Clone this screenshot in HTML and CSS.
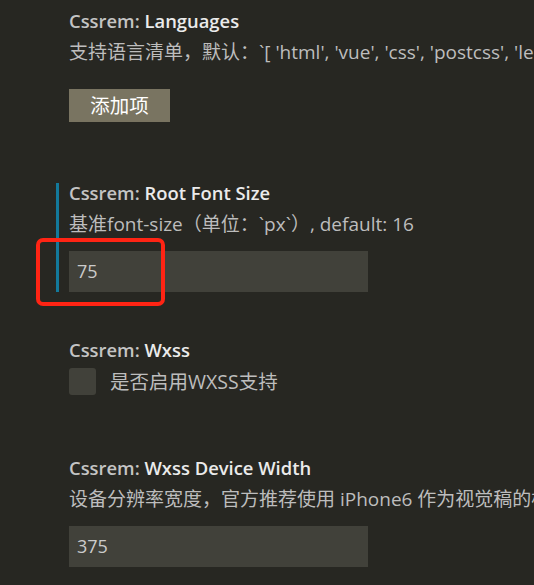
FILE: index.html
```html
<!DOCTYPE html>
<html lang="zh-CN">
<head>
<meta charset="utf-8">
<title>Cssrem settings</title>
<link rel="stylesheet" href="styles.css">
</head>
<body>
<div class="settings">
  <div class="setting s-lang">
    <div class="title"><span class="cat">Cssrem: </span><span class="label">Languages</span></div>
    <div class="desc">支持语言清单，默认：`[ 'html', 'vue', 'css', 'postcss', 'less', 'scss', 'sass', 'stylus' ]`</div>
    <button class="btn">添加项</button>
  </div>

  <div class="setting s-root focused">
    <div class="title"><span class="cat">Cssrem: </span><span class="label">Root Font Size</span></div>
    <div class="desc">基准font-size（单位：`px`）, default: 16</div>
    <div class="input">75</div>
    <div class="mark"></div>
  </div>

  <div class="setting s-wxss">
    <div class="title"><span class="cat">Cssrem: </span><span class="label">Wxss</span></div>
    <div class="check-row">
      <span class="checkbox"></span>
      <span class="check-label">是否启用WXSS支持</span>
    </div>
  </div>

  <div class="setting s-width">
    <div class="title"><span class="cat">Cssrem: </span><span class="label">Wxss Device Width</span></div>
    <div class="desc">设备分辨率宽度，官方推荐使用 iPhone6 作为视觉稿的标准。</div>
    <div class="input">375</div>
  </div>
</div>
</body>
</html>
```

FILE: styles.css
```css
html, body {
  margin: 0;
  padding: 0;
  background: #272722;
  overflow: hidden;
}

body {
  width: 534px;
  height: 585px;
  font-family: "Open Sans", "Noto Sans CJK SC", sans-serif;
  font-size: 18px;
  color: #bdbdbd;
}

.settings {
  padding-left: 69px;
  position: relative;
}

.setting {
  position: relative;
  white-space: nowrap;
}

.title {
  line-height: 20px;
  height: 20px;
  font-weight: 600;
  font-size: 18.4px;
}

.cat {
  color: #c4c4c4;
}

.label {
  color: #ebebeb;
}

.desc {
  margin-top: 11px;
  line-height: 20px;
  height: 20px;
  font-size: 19px;
  color: #bdbdbd;
}

.s-lang {
  padding-top: 11px;
}

.btn {
  display: block;
  margin-top: 27px;
  width: 101px;
  height: 33px;
  padding: 0;
  border: none;
  background: #797461;
  color: #ffffff;
  font-family: "Open Sans", "Noto Sans CJK SC", sans-serif;
  font-size: 19.5px;
  line-height: 33px;
  text-align: center;
}

.s-root {
  margin-top: 61px;
}

.focused {
  margin-left: -13px;
  padding-left: 10px;
  border-left: 3px solid #13799b;
}

.input {
  margin-top: 17px;
  width: 291px;
  height: 41px;
  padding-left: 8px;
  background: #41413a;
  color: #cbcbcb;
  line-height: 41px;
}

.mark {
  position: absolute;
  left: -23px;
  top: 55px;
  width: 121px;
  height: 60px;
  border: 4px solid #ff2414;
  border-radius: 7px;
}

.s-wxss {
  margin-top: 48px;
}

.check-row {
  margin-top: 8px;
  display: flex;
  align-items: center;
  height: 27px;
}

.checkbox {
  width: 27px;
  height: 27px;
  border-radius: 3px;
  background: #41413a;
}

.check-label {
  margin-left: 14px;
  line-height: 27px;
  font-size: 19.5px;
  color: #bdbdbd;
}

.s-width {
  margin-top: 63px;
}
```
